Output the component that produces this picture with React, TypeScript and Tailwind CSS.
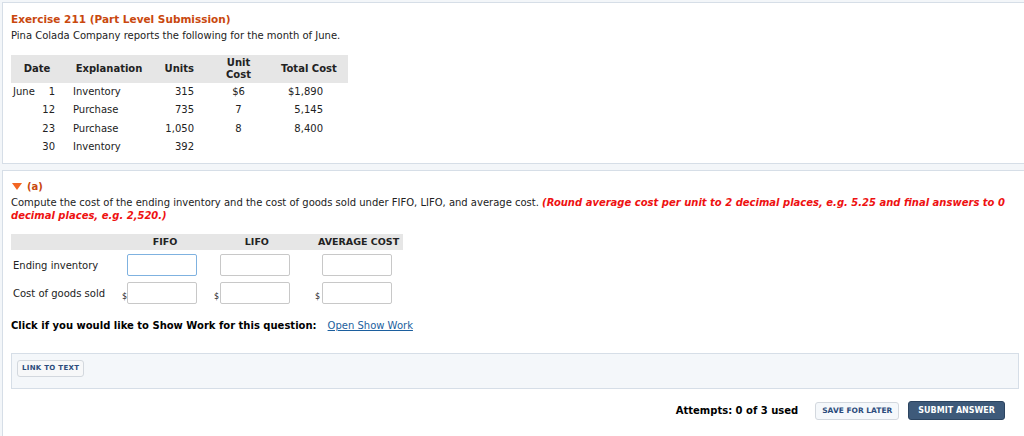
const F = { fontFamily: '"DejaVu Sans", Verdana, sans-serif' };

const rows = [
  { m: "June", d: "1", e: "Inventory", u: "315", c: "$6", t: "$1,890" },
  { m: "", d: "12", e: "Purchase", u: "735", c: "7", t: "5,145" },
  { m: "", d: "23", e: "Purchase", u: "1,050", c: "8", t: "8,400" },
  { m: "", d: "30", e: "Inventory", u: "392", c: "", t: "" },
];

const Box = ({ focus }: { focus?: boolean }) => (
  <input
    type="text"
    className={
      focus
        ? "w-[70px] h-[22px] border border-[#7fb2e0] rounded-[2px] bg-white outline-none"
        : "w-[70px] h-[22px] border border-[#c8c8c8] rounded-[2px] bg-white outline-none"
    }
  />
);

export default function App() {
  return (
    <div className="w-[1024px] h-[436px] overflow-hidden bg-[#f3f6f9] text-[10px] text-[#222]" style={F}>
      {/* problem card */}
      <div className="ml-[2px] mt-[2px] h-[162px] bg-white border-l border-t border-b border-[#d6dee7] pl-[8px] pt-[9px]">
        <h1 className="text-[#c9480e] font-bold text-[10.5px] leading-[14px]">Exercise 211 (Part Level Submission)</h1>
        <p className="mt-[3px] leading-[13px]">Pina Colada Company reports the following for the month of June.</p>

        <table className="mt-[13px] w-[337px] border-collapse table-fixed">
          <colgroup>
            <col className="w-[28px]" />
            <col className="w-[20px]" />
            <col className="w-[100px]" />
            <col className="w-[37px]" />
            <col className="w-[85px]" />
            <col />
          </colgroup>
          <thead>
            <tr className="bg-[#e6e6e6] font-bold text-[10px] leading-[12px]">
              <th colSpan={2} className="h-[28px] text-center pl-[4px]">Date</th>
              <th className="text-center whitespace-nowrap">Explanation</th>
              <th className="text-right pr-[2px]">Units</th>
              <th className="text-center">Unit<br />Cost</th>
              <th className="text-center pr-[22px] whitespace-nowrap">Total Cost</th>
            </tr>
          </thead>
          <tbody className="leading-[18.3px]">
            {rows.map((r, i) => (
              <tr key={i}>
                <td className="pl-[2px]">{r.m}</td>
                <td className="text-right pr-[4px]">{r.d}</td>
                <td className="pl-[14px]">{r.e}</td>
                <td className="text-right pr-[2px]">{r.u}</td>
                <td className="text-center">{r.c}</td>
                <td className="text-right pr-[25px]">{r.t}</td>
              </tr>
            ))}
          </tbody>
        </table>
      </div>

      {/* part (a) card */}
      <div className="ml-[2px] mt-[6px] h-[266px] bg-white border-l border-t border-[#d6dee7] pl-[8px] pt-[9px] flex flex-col">
        <div className="flex items-center gap-[5px] pl-[1px] leading-[13px]">
          <svg width="10" height="7" viewBox="0 0 10 7">
            <path d="M0 0 H10 L5 7 Z" fill="#f26522" />
          </svg>
          <span className="font-bold text-[#c9480e] text-[10px]">(a)</span>
        </div>
        <div className="mt-[3px] leading-[13px] pr-[8px]">
          <p>
            Compute the cost of the ending inventory and the cost of goods sold under FIFO, LIFO, and average cost.{" "}
            <b className="text-[#ee1111] italic">(Round average cost per unit to 2 decimal places, e.g. 5.25 and final answers to 0</b>
          </p>
          <p className="text-[#ee1111] font-bold italic">decimal places, e.g. 2,520.)</p>
        </div>

        <div className="mt-[12px] w-[392px]">
          <div className="flex bg-[#e6e6e6] h-[16px] items-center font-bold text-[9.5px] whitespace-nowrap">
            <span className="w-[116px]" />
            <span className="w-[80px] text-center">FIFO</span>
            <span className="w-[13px]" />
            <span className="w-[80px] text-center">LIFO</span>
            <span className="w-[18px]" />
            <span className="w-[90px] text-center">AVERAGE COST</span>
          </div>
          <div className="flex items-center h-[22px] mt-[4px]">
            <span className="w-[116px] pl-[2px]">Ending inventory</span>
            <Box focus />
            <span className="w-[23px]" />
            <Box />
            <span className="w-[32px]" />
            <Box />
          </div>
          <div className="flex items-center h-[22px] mt-[6px]">
            <span className="w-[111px] pl-[2px]">Cost of goods sold</span>
            <span className="w-[5px] self-end mb-[1px] text-[8px]">$</span>
            <Box />
            <span className="w-[17px]" />
            <span className="w-[6px] self-end mb-[1px] text-[8px]">$</span>
            <Box />
            <span className="w-[25px]" />
            <span className="w-[7px] self-end mb-[1px] text-[8px]">$</span>
            <Box />
          </div>
        </div>

        <div className="mt-[15px] flex items-center leading-[13px]">
          <span className="font-bold text-black">Click if you would like to Show Work for this question:</span>
          <a href="#" className="ml-[11px] text-[#1c5f9e] underline">Open Show Work</a>
        </div>

        <div className="mt-[21px] mr-[5px] h-[36px] bg-[#f4f7fa] border border-[#d6dee7] pl-[5px] pt-[5px]">
          <button className="h-[17px] px-[4px] bg-[#f7f8f9] border border-[#d3d8de] rounded-[3px] text-[7px] font-bold text-[#2c4c7c] tracking-[0.3px]">
            LINK TO TEXT
          </button>
        </div>

        <div className="mt-[12px] flex items-center justify-end pr-[19px]">
          <span className="font-bold text-black text-[10px]">Attempts: 0 of 3 used</span>
          <button className="ml-[17px] h-[18px] px-[6px] bg-[#f5f8fb] border border-[#d3d8de] rounded-[3px] text-[7.5px] font-bold text-[#2c4c7c]">
            SAVE FOR LATER
          </button>
          <button className="ml-[9px] h-[19px] px-[9px] bg-[#3e5a7a] border border-[#2c4460] rounded-[3px] text-[8px] font-bold text-white">
            SUBMIT ANSWER
          </button>
        </div>
      </div>
    </div>
  );
}
